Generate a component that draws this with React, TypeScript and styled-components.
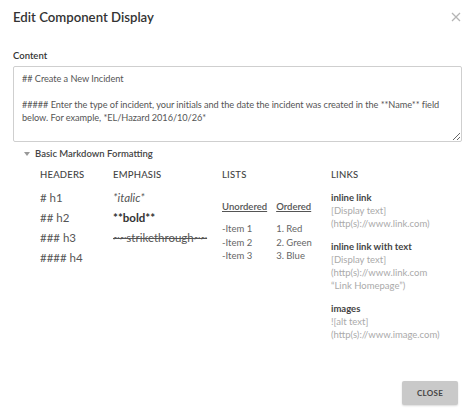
import React from 'react'
import styled, { createGlobalStyle } from 'styled-components'

const GlobalStyle = createGlobalStyle`
  html, body {
    margin: 0;
    padding: 0;
    background: #fff;
  }
  body {
    font-family: Lato, 'Open Sans', sans-serif;
    color: #555;
  }
  * {
    box-sizing: border-box;
  }
`

const contentText = `## Create a New Incident

##### Enter the type of incident, your initials and the date the incident was created in the **Name** field below. For example, *EL/Hazard 2016/10/26*`

const headers = ['# h1', '## h2', '### h3', '#### h4']

const linkGroups = [
  { title: 'inline link', lines: ['[Display text]', '(http(s)://www.link.com)'] },
  {
    title: 'inline link with text',
    lines: ['[Display text]', '(http(s)://www.link.com', '“Link Homepage”)'],
  },
  { title: 'images', lines: ['![alt text]', '(http(s)://www.image.com)'] },
]

const App: React.FC = () => {
  return (
    <>
      <GlobalStyle />
      <StyledDialog>
        <StyledHeader>
          <StyledTitle>Edit Component Display</StyledTitle>
          <StyledCloseIcon aria-label="Close">
            <svg width="10" height="10" viewBox="0 0 10 10">
              <path d="M1 1L9 9M9 1L1 9" stroke="#b5b5b5" strokeWidth="1.3" />
            </svg>
          </StyledCloseIcon>
        </StyledHeader>

        <StyledBody>
          <StyledLabel>Content</StyledLabel>
          <StyledTextarea defaultValue={contentText} spellCheck={false} />

          <StyledDetails open>
            <StyledSummary>
              <StyledCaret />
              Basic Markdown Formatting
            </StyledSummary>

            <StyledGrid>
              <StyledColumn>
                <StyledColumnTitle>HEADERS</StyledColumnTitle>
                <StyledStack $top={7}>
                  {headers.map((h) => (
                    <StyledHeaderRow key={h}>{h}</StyledHeaderRow>
                  ))}
                </StyledStack>
              </StyledColumn>

              <StyledColumn>
                <StyledColumnTitle>EMPHASIS</StyledColumnTitle>
                <StyledStack $top={7}>
                  <StyledEmphasisRow $variant="italic">*italic*</StyledEmphasisRow>
                  <StyledEmphasisRow $variant="bold">**bold**</StyledEmphasisRow>
                  <StyledEmphasisRow $variant="strike">~~strikethrough~~</StyledEmphasisRow>
                </StyledStack>
              </StyledColumn>

              <StyledColumn>
                <StyledColumnTitle>LISTS</StyledColumnTitle>
                <StyledListRow>
                  <StyledList>
                    <StyledListTitle>Unordered</StyledListTitle>
                    <StyledListItem>-Item 1</StyledListItem>
                    <StyledListItem>-Item 2</StyledListItem>
                    <StyledListItem>-Item 3</StyledListItem>
                  </StyledList>
                  <StyledList>
                    <StyledListTitle>Ordered</StyledListTitle>
                    <StyledListItem>1. Red</StyledListItem>
                    <StyledListItem>2. Green</StyledListItem>
                    <StyledListItem>3. Blue</StyledListItem>
                  </StyledList>
                </StyledListRow>
              </StyledColumn>

              <StyledColumn>
                <StyledColumnTitle>LINKS</StyledColumnTitle>
                <StyledLinkGroups>
                  {linkGroups.map((g) => (
                    <div key={g.title}>
                      <StyledLinkTitle>{g.title}</StyledLinkTitle>
                      {g.lines.map((l) => (
                        <StyledLinkLine key={l}>{l}</StyledLinkLine>
                      ))}
                    </div>
                  ))}
                </StyledLinkGroups>
              </StyledColumn>
            </StyledGrid>
          </StyledDetails>
        </StyledBody>

        <StyledFooter>
          <StyledButton>CLOSE</StyledButton>
        </StyledFooter>
      </StyledDialog>
    </>
  )
}

const StyledDialog = styled.div`
  width: 474px;
  height: 411px;
  display: flex;
  flex-direction: column;
  background: #fff;
`

const StyledHeader = styled.div`
  display: flex;
  align-items: center;
  justify-content: space-between;
  padding: 5px 12px 0 13px;
  height: 29px;
`

const StyledTitle = styled.h2`
  margin: 0;
  font-size: 13.2px;
  font-weight: 600;
  color: #333;
  line-height: 16px;
`

const StyledCloseIcon = styled.button`
  border: 0;
  background: none;
  padding: 0;
  width: 12px;
  height: 12px;
  display: flex;
  align-items: center;
  justify-content: center;
`

const StyledBody = styled.div`
  flex: 1;
  padding: 20px 12px 0 13px;
`

const StyledLabel = styled.div`
  font-size: 9.5px;
  font-weight: 600;
  color: #333;
  line-height: 13px;
  margin-bottom: 4px;
`

const StyledTextarea = styled.textarea`
  display: block;
  width: 449px;
  height: 76px;
  margin: 0;
  padding: 5px 8px;
  border: 1px solid #cfcfcf;
  border-radius: 2px;
  font-family: Lato, 'Open Sans', sans-serif;
  font-size: 9.2px;
  letter-spacing: -0.05px;
  line-height: 13px;
  color: #555;
  resize: vertical;
  outline: none;
`

const StyledDetails = styled.details`
  margin-top: 5px;
`

const StyledSummary = styled.summary`
  list-style: none;
  display: flex;
  align-items: center;
  font-size: 9.5px;
  font-weight: 600;
  color: #444;
  line-height: 13px;
  padding-left: 11px;
  cursor: pointer;
  &::-webkit-details-marker {
    display: none;
  }
`

const StyledCaret = styled.span`
  width: 0;
  height: 0;
  border-left: 3px solid transparent;
  border-right: 3px solid transparent;
  border-top: 4px solid #999;
  margin-right: 5px;
`

const StyledGrid = styled.div`
  display: grid;
  grid-template-columns: 73px 109px 109px 1fr;
  padding: 8px 0 0 27px;
`

const StyledColumn = styled.div`
  display: flex;
  flex-direction: column;
`

const StyledColumnTitle = styled.div`
  font-size: 9.5px;
  font-weight: 500;
  color: #444;
  line-height: 13px;
  letter-spacing: 0.2px;
`

const StyledStack = styled.div<{ $top: number }>`
  display: flex;
  flex-direction: column;
  margin-top: ${(props) => props.$top}px;
`

const StyledHeaderRow = styled.div`
  font-size: 11.5px;
  line-height: 20px;
  color: #555;
`

const StyledEmphasisRow = styled.div<{ $variant: 'italic' | 'bold' | 'strike' }>`
  font-size: 11.5px;
  line-height: 20px;
  color: ${(props) => (props.$variant === 'bold' ? '#333' : '#555')};
  font-style: ${(props) => (props.$variant === 'italic' ? 'italic' : 'normal')};
  font-weight: ${(props) => (props.$variant === 'bold' ? 700 : 400)};
  text-decoration: ${(props) => (props.$variant === 'strike' ? 'line-through' : 'none')};
`

const StyledListRow = styled.div`
  display: flex;
  gap: 9px;
  margin-top: 19px;
`

const StyledList = styled.div`
  display: flex;
  flex-direction: column;
`

const StyledListTitle = styled.div`
  font-size: 9.5px;
  font-weight: 600;
  color: #555;
  text-decoration: underline;
  line-height: 13px;
  margin-bottom: 9px;
`

const StyledListItem = styled.div`
  font-size: 9.5px;
  line-height: 13.5px;
  color: #666;
`

const StyledLinkGroups = styled.div`
  display: flex;
  flex-direction: column;
  gap: 10px;
  margin-top: 10px;
`

const StyledLinkTitle = styled.div`
  font-size: 9.5px;
  font-weight: 700;
  color: #444;
  line-height: 13px;
`

const StyledLinkLine = styled.div`
  font-size: 9.5px;
  color: #aaa;
  line-height: 13px;
`

const StyledFooter = styled.div`
  display: flex;
  justify-content: flex-end;
  padding: 0 16px 6px 0;
`

const StyledButton = styled.button`
  width: 56px;
  height: 24px;
  border: 0;
  border-radius: 2px;
  background: #c9c9c9;
  box-shadow: 0 1px 2px rgba(0, 0, 0, 0.15);
  font-family: Lato, 'Open Sans', sans-serif;
  font-size: 8px;
  font-weight: 700;
  letter-spacing: 0.3px;
  color: #444;
  cursor: pointer;
`

export default App
